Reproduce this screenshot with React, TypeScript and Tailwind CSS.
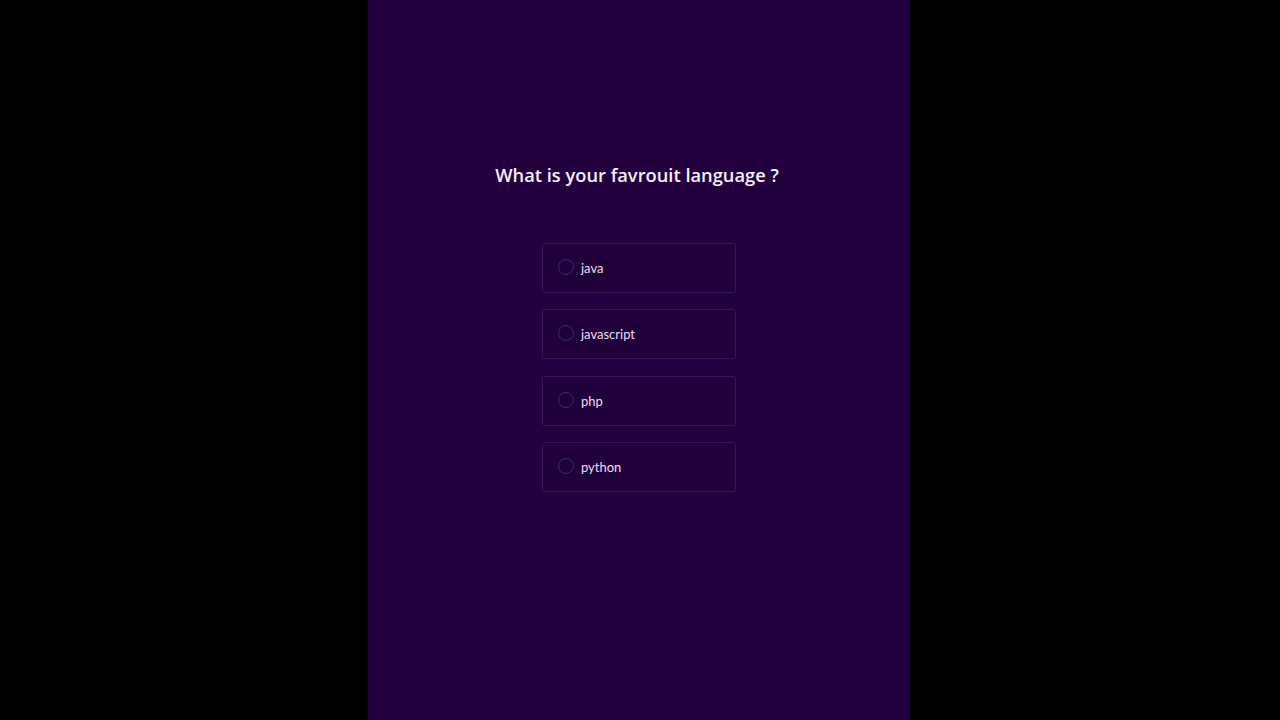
import { useState } from "react";

const options = ["java", "javascript", "php", "python"];

export default function App() {
  const [selected, setSelected] = useState<string | null>(null);

  return (
    <div className="min-h-screen w-full bg-black flex justify-center pr-[2px] font-['Open_Sans','Noto_Sans',sans-serif]">
      <div className="w-[542px] min-h-screen bg-[#23003e] flex flex-col items-center pt-[162px]">
        <h1 className="text-[18.3px] leading-[26px] font-semibold text-[#f7f0fa] pr-[4px]">
          What is your favrouit language ?
        </h1>

        <div className="mt-[55px] flex flex-col gap-[16.4px]">
          {options.map((opt) => (
            <label
              key={opt}
              className="w-[194px] h-[50px] rounded-[3px] border border-[#34155e] bg-[#20003a] flex items-center pl-[15px] gap-[7px] cursor-pointer"
              onClick={() => setSelected(opt)}
            >
              <span
                className={`w-[16px] h-[16px] rounded-full border border-[#2f2f7c] -mt-[2px] ${selected === opt ? "bg-[#2f2f7c]" : ""}`}
              />
              <span className="font-['Lato',sans-serif] text-[13px] leading-[18px] text-[#f1dbf4]">{opt}</span>
            </label>
          ))}
        </div>
      </div>
    </div>
  );
}
